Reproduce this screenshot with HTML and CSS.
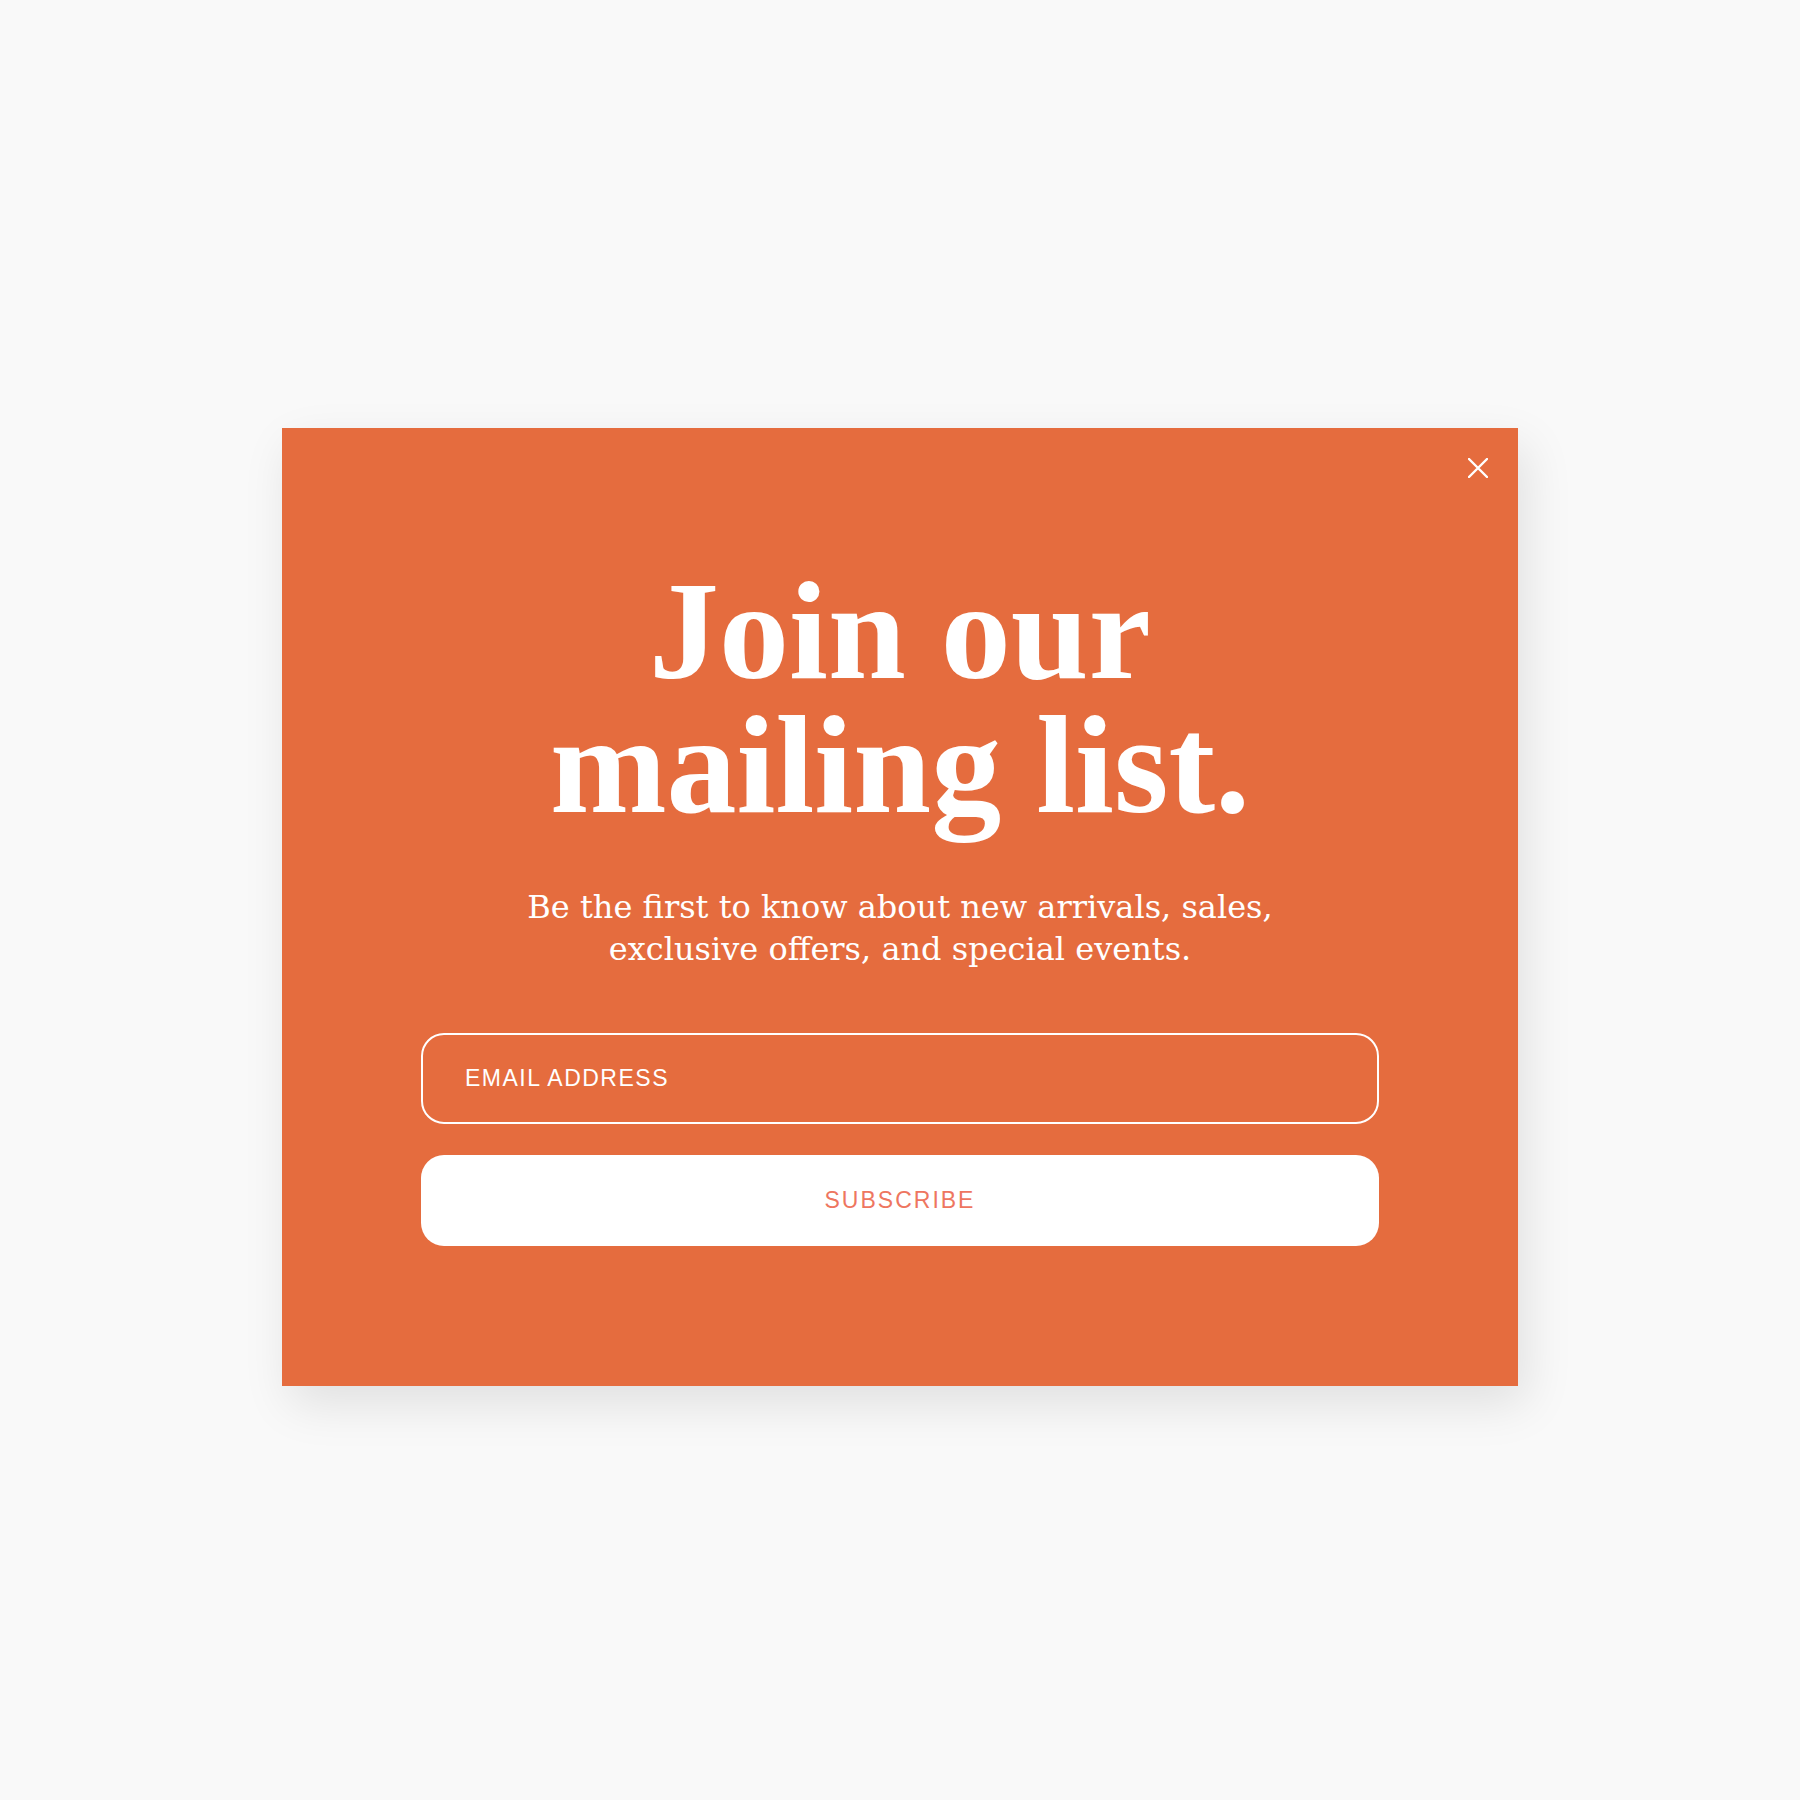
FILE: index.html
```html
<!DOCTYPE html>
<html lang="en">
<head>
    <meta charset="UTF-8">
    <meta name="viewport" content="width=device-width, initial-scale=1.0">
    <title>Newsletter Signup</title>
    <link rel="stylesheet" href="styles.css">
</head>
<body>
    <div class="signup-popup">
        <button class="close-button" type="button" aria-label="Close">
            <svg width="20" height="20" viewBox="0 0 20 20">
                <path d="M1 1 L19 19 M19 1 L1 19" stroke="#fff" stroke-width="2.4" stroke-linecap="round" fill="none"/>
            </svg>
        </button>

        <h1 class="popup-title">
            <span class="title-line">Join our</span>
            <span class="title-line">mailing list.</span>
        </h1>
        <p class="popup-text">Be the first to know about new arrivals, sales,<br>exclusive offers, and special events.</p>

        <form class="signup-form" onsubmit="return false;">
            <input class="email-input" type="email" placeholder="EMAIL ADDRESS">
            <button class="subscribe-button" type="submit">SUBSCRIBE</button>
        </form>
    </div>
</body>
</html>
```

FILE: styles.css
```css
body {
    margin: 0;
    min-height: 100vh;
    background-color: #f9f9f9;
    font-family: "Liberation Sans", Arial, sans-serif;
    display: flex;
    justify-content: center;
    align-items: flex-start;
    padding-top: 428px;
    box-sizing: border-box;
}
.signup-popup {
    position: relative;
    width: 1236px;
    box-sizing: border-box;
    padding: 136px 139px 140px;
    background-color: #e56c3e;
    box-shadow: 8px 18px 45px rgba(0, 0, 0, 0.1);
    text-align: center;
    color: #fff;
}
.close-button {
    position: absolute;
    top: 30px;
    right: 30px;
    width: 20px;
    height: 20px;
    padding: 0;
    border: none;
    background: none;
    cursor: pointer;
    display: flex;
}
.popup-title {
    margin: 0;
    font-family: "Liberation Serif", "Times New Roman", serif;
    font-weight: 700;
    font-size: 140px;
    line-height: 134px;
}
.title-line {
    display: block;
    height: 134px;
}
.popup-text {
    margin: 54px 0 0;
    font-family: "DejaVu Serif", Georgia, serif;
    font-size: 32px;
    line-height: 42px;
}
.signup-form {
    margin-top: 63px;
    display: flex;
    flex-direction: column;
    gap: 31px;
}
.email-input {
    height: 91px;
    box-sizing: border-box;
    padding: 0 42px;
    border: 2px solid #fff;
    border-radius: 23px;
    background: transparent;
    color: #fff;
    font-family: "Liberation Sans", Arial, sans-serif;
    font-size: 23px;
    letter-spacing: 1.5px;
    outline: none;
}
.email-input::placeholder {
    color: #fff;
    opacity: 1;
}
.subscribe-button {
    height: 91px;
    border: none;
    border-radius: 23px;
    background-color: #fff;
    color: #ee7660;
    font-family: "Liberation Sans", Arial, sans-serif;
    font-size: 23px;
    letter-spacing: 2px;
    cursor: pointer;
}
```
